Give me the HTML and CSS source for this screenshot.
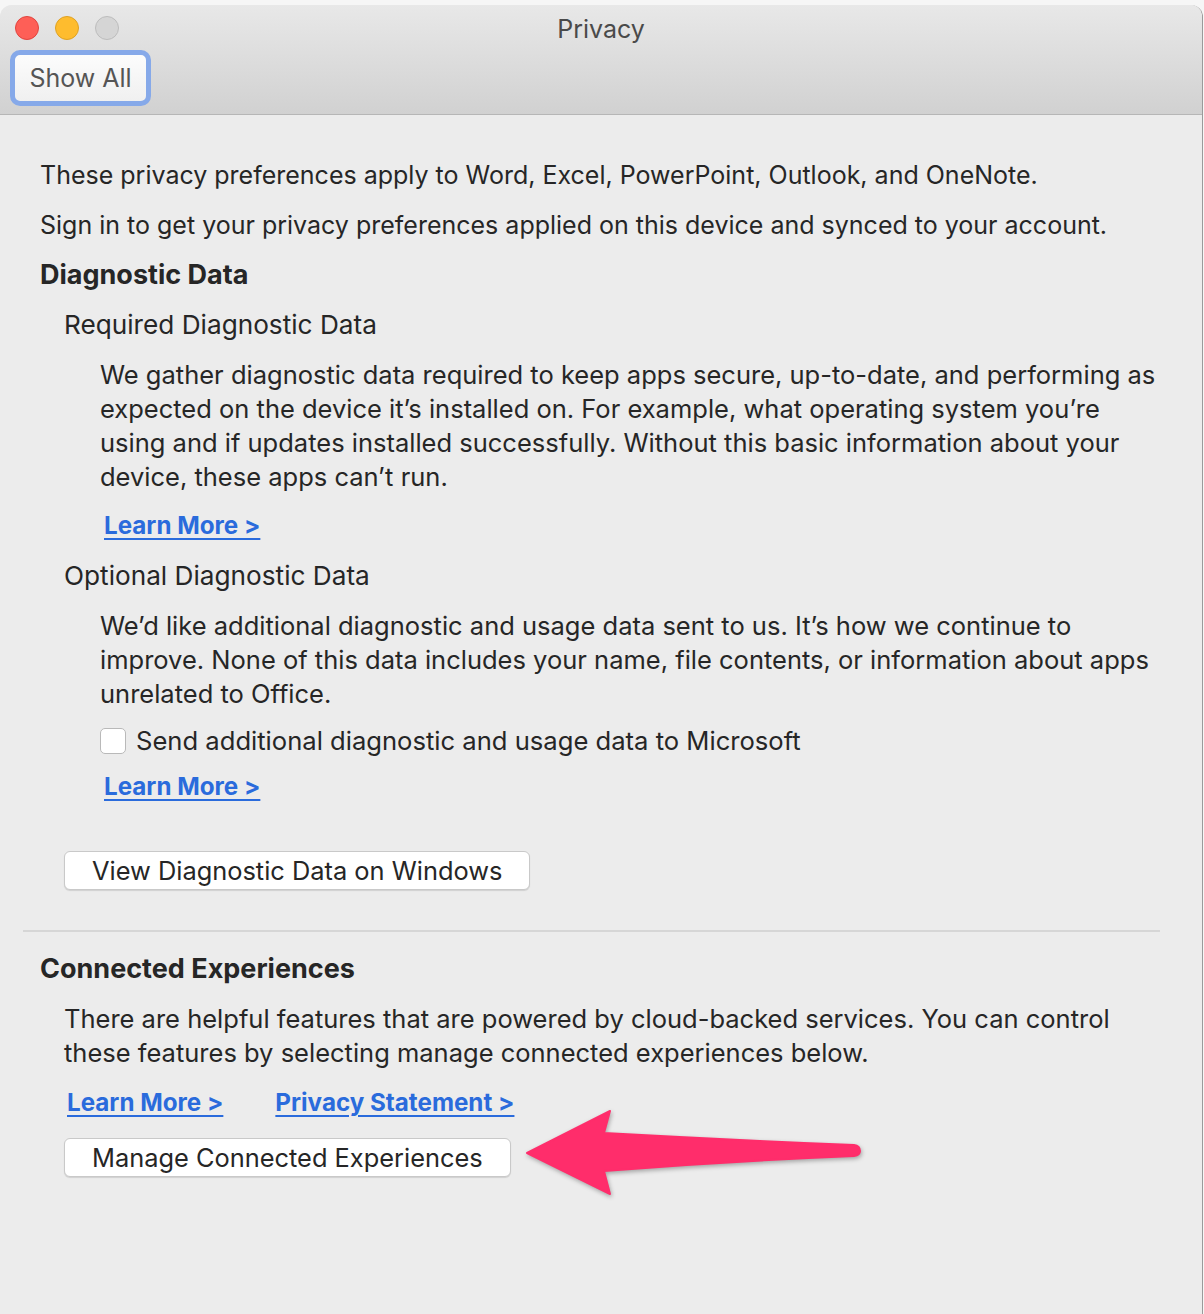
FILE: index.html
```html
<!DOCTYPE html>
<html lang="en">

<head>
  <meta charset="UTF-8">
  <title>Privacy</title>
  <link rel="stylesheet" href="styles.css">
</head>

<body>

  <div class="window">
    <div class="titlebar">
      <div class="traffic">
        <span class="light red"></span>
        <span class="light yellow"></span>
        <span class="light gray"></span>
      </div>
      <div class="title">Privacy</div>
      <button class="show-all">Show All</button>
    </div>

    <div class="content">
      <p class="line">These privacy preferences apply to Word, Excel, PowerPoint, Outlook, and OneNote.</p>
      <p class="line gap">Sign in to get your privacy preferences applied on this device and synced to your account.</p>

      <h2 class="heading gap">Diagnostic Data</h2>

      <div class="sub">
        <h3 class="subheading gap">Required Diagnostic Data</h3>
        <div class="body">
          <p class="para gap">We gather diagnostic data required to keep apps secure, up-to-date, and performing as expected on the device it’s installed on. For example, what operating system you’re using and if updates installed successfully. Without this basic information about your device, these apps can’t run.</p>
          <a class="link link-gap" href="#">Learn More &gt;</a>
        </div>

        <h3 class="subheading gap">Optional Diagnostic Data</h3>
        <div class="body">
          <p class="para gap">We’d like additional diagnostic and usage data sent to us. It’s how we continue to improve. None of this data includes your name, file contents, or information about apps unrelated to Office.</p>
          <label class="check">
            <span class="box"></span>
            Send additional diagnostic and usage data to Microsoft
          </label>
          <a class="link check-link" href="#">Learn More &gt;</a>
        </div>

        <button class="btn view-btn">View Diagnostic Data on Windows</button>
      </div>

      <hr class="divider">

      <h2 class="heading connected">Connected Experiences</h2>
      <div class="sub">
        <p class="para gap wrap">There are helpful features that are powered by cloud-backed services. You can control these features by selecting manage connected experiences below.</p>
        <div class="links">
          <a class="link" href="#">Learn More &gt;</a>
          <a class="link" href="#">Privacy Statement &gt;</a>
        </div>
        <button class="btn manage-btn">Manage Connected Experiences</button>
      </div>
    </div>
  </div>

  <!-- annotation arrow -->
  <svg class="arrow" width="360" height="110" viewBox="0 0 360 110">
    <path d="M7 53 L90 11 L84 33 Q210 40 334 45 Q340 46 340 51 Q340 55 334 56 Q210 61 84 71 L90 94 Z" fill="#ff2d6b" stroke="#ff2d6b" stroke-width="2" stroke-linejoin="round" />
  </svg>

</body>

</html>
```

FILE: styles.css
```css
body {
  margin: 0;
  background-color: #f6f6f6;
  font-family: "Inter", "Noto Sans", sans-serif;
  color: #262626;
  position: relative;
  min-height: 1314px;
}

.window {
  margin-top: 5px;
  width: 1202px;
  height: 1309px;
  background-color: #ececec;
  border-right: 1px solid #9a9a9a;
  border-radius: 12px 12px 0 0;
  overflow: hidden;
}

.titlebar {
  position: relative;
  height: 110px;
  background: linear-gradient(#e8e8e8, #d1d1d1);
  border-bottom: 1px solid #b6b6b6;
  box-sizing: border-box;
  padding: 11px 10px 0 10px;
}

.traffic {
  display: flex;
  gap: 16px;
  padding-left: 5px;
}

.light {
  width: 24px;
  height: 24px;
  border-radius: 50%;
  box-sizing: border-box;
}

.red {
  background-color: #fe5f57;
  border: 1px solid #e0443e;
}

.yellow {
  background-color: #febc2e;
  border: 1px solid #dea123;
}

.gray {
  background-color: #d5d5d5;
  border: 1px solid #bcbcbc;
}

.title {
  position: absolute;
  top: 9px;
  left: 0;
  right: 0;
  text-align: center;
  font-size: 25px;
  color: #4a4a4a;
}

.show-all {
  margin-top: 10px;
  height: 56px;
  width: 141px;
  font-family: inherit;
  font-size: 25px;
  color: #555;
  background: linear-gradient(#fcfcfc, #f0f0f0);
  border: 5px solid #86a9e9;
  border-radius: 10px;
  padding: 0;
}

.content {
  padding: 43px 0 0 40px;
}

p,
h2,
h3 {
  margin: 0;
}

.line,
.para,
.heading,
.subheading {
  font-size: 25px;
  line-height: 34px;
}

.para {
  font-size: 25.5px;
}

.gap {
  margin-top: 16px;
}

.heading {
  font-size: 27px;
  font-weight: 700;
}

.subheading {
  font-size: 26.2px;
  font-weight: 400;
}

.sub {
  padding-left: 24px;
}

.body {
  padding-left: 36px;
  padding-right: 38px;
}

.wrap {
  padding-right: 38px;
}

.link {
  display: inline-block;
  font-size: 24.2px;
  line-height: 34px;
  font-weight: 700;
  color: #2a6bdc;
  text-decoration: underline;
  text-underline-offset: 4px;
  text-decoration-thickness: 2px;
}

.link-gap {
  margin: 15px 0 0 4px;
}

.check {
  display: flex;
  align-items: center;
  gap: 10px;
  margin-top: 13px;
  font-size: 25.6px;
  line-height: 34px;
}

.box {
  width: 26px;
  height: 26px;
  background-color: #fff;
  border: 1px solid #b9b9b9;
  border-radius: 5px;
  box-sizing: border-box;
}

.check-link {
  margin: 12px 0 0 4px;
}

.btn {
  display: block;
  height: 39px;
  padding: 0 27px;
  font-family: inherit;
  font-size: 25.4px;
  color: #262626;
  background-color: #fff;
  border: 1px solid #c9c9c9;
  border-radius: 6px;
  box-shadow: 0 1px 1px rgba(0, 0, 0, 0.12);
}

.view-btn {
  margin-top: 47px;
}

.divider {
  margin: 40px 42px 0 -17px;
  border: none;
  border-top: 2px solid #d6d6d6;
}

.connected {
  margin-top: 20px;
}

.links {
  display: flex;
  gap: 52px;
  margin: 16px 0 0 3px;
}

.manage-btn {
  margin-top: 18px;
}

.arrow {
  position: absolute;
  left: 520px;
  top: 1100px;
  filter: drop-shadow(1px 2px 2px rgba(0, 0, 0, 0.3));
}
```
